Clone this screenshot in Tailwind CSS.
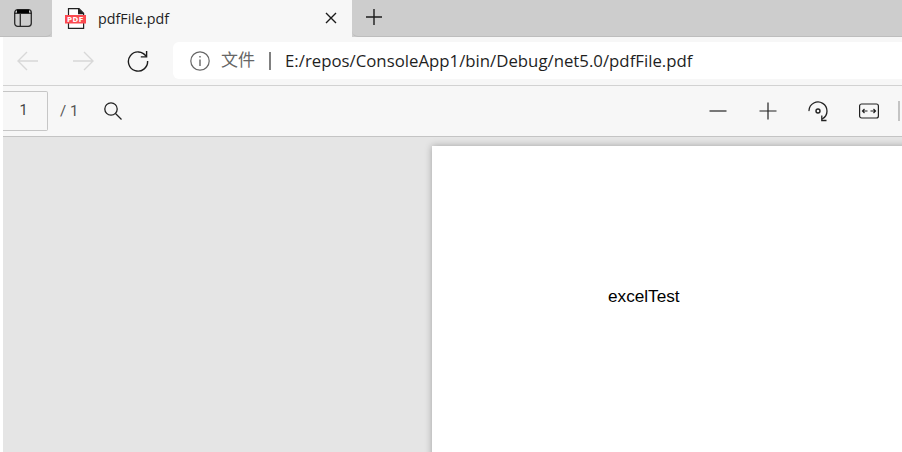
<!DOCTYPE html>
<html lang="en">
  <head>
    <meta charset="UTF-8" />
    <title>pdfFile.pdf</title>
    <script src="https://cdn.jsdelivr.net/npm/@tailwindcss/browser@4"></script>
  </head>
  <body class="w-[902px] h-[452px] overflow-hidden bg-white font-['Roboto','Noto_Sans_CJK_SC',sans-serif]">
    <!-- tab strip -->
    <div class="flex h-[37px] bg-[#cdcdcd]">
      <div class="w-[52px] h-[37px] flex items-center pl-[14px] pb-[1px] border-b border-[#bdbdbd] rounded-br-[6px]">
        <svg width="18" height="18" viewBox="0 0 18 18" fill="none" stroke="#2a2a2a" stroke-width="1.3">
          <rect x="0.7" y="0.7" width="16.6" height="16.6" rx="3" />
          <path d="M3 2.5H15" stroke="#000" stroke-width="3.6" />
          <path d="M0.7 4.2H17.3" stroke="#000" stroke-width="1" />
          <path d="M6.3 4.5V17" />
        </svg>
      </div>
      <div class="w-[300px] h-[37px] bg-[#f7f7f7] flex items-center pl-[13px] pr-[15px] relative">
        <svg width="21" height="21" viewBox="0 0 21 21" fill="none">
          <path d="M3.5 0.7H14L18.6 5.3V20.3H3.5Z" fill="#fff" stroke="#222" stroke-width="1.2" />
          <path d="M13.6 0.7V5.6H18.6" fill="#222" stroke="#222" stroke-width="1.2" />
          <rect x="0" y="7" width="21" height="8.5" fill="#fb4a50" />
          <text x="10.5" y="14" text-anchor="middle" font-family="'DejaVu Sans'" font-size="6.8" font-weight="700" fill="#fff" letter-spacing="0.5">PDF</text>
        </svg>
        <span class="ml-[12px] text-[14.3px] text-[#1f1f1f] font-['Open_Sans','Roboto',sans-serif]">pdfFile.pdf</span>
        <svg class="ml-auto mb-[1px]" width="12" height="12" viewBox="0 0 12 12" stroke="#1a1a1a" stroke-width="1.4">
          <path d="M1 1L11 11M11 1L1 11" />
        </svg>
      </div>
      <div class="flex-1 h-[37px] border-b border-[#bdbdbd] rounded-bl-[6px] flex items-center pl-[13px] pb-[2px]">
        <svg width="18" height="18" viewBox="0 0 18 18" stroke="#1c1c1c" stroke-width="1.4">
          <path d="M9 1V17M1 9H17" />
        </svg>
      </div>
    </div>

    <div class="flex h-[415px]">
      <div class="w-[3px] shrink-0 bg-white"></div>
      <div class="flex-1 flex flex-col min-w-0">
        <!-- address bar -->
        <div class="h-[49px] shrink-0 bg-[#f7f7f7] border-b border-[#d2d2d2] flex items-start">
          <div class="w-[170px] h-[48px] flex items-center shrink-0">
            <svg class="ml-[14px]" width="22" height="20" viewBox="0 0 22 20" fill="none" stroke="#d8d8d8" stroke-width="1.4">
              <path d="M21 10H1M10 1L1 10L10 19" />
            </svg>
            <svg class="ml-[33px]" width="22" height="20" viewBox="0 0 22 20" fill="none" stroke="#d8d8d8" stroke-width="1.4">
              <path d="M1 10H21M12 1L21 10L12 19" />
            </svg>
            <svg class="ml-[33px]" width="22" height="22" viewBox="0 0 22 22" fill="none" stroke="#1c1c1c" stroke-width="1.4">
              <path d="M19.2 6.5A9.6 9.6 0 1 0 20.6 11" />
              <path d="M19.6 1V6.9H13.8" />
            </svg>
          </div>
          <div class="flex-1 h-[37px] mt-[5px] bg-white rounded-l-[6px] flex items-center pl-[17px] text-[#1f1f1f]">
            <svg width="20" height="20" viewBox="0 0 20 20" fill="none" stroke="#666" stroke-width="1.2">
              <circle cx="10" cy="10" r="9.2" />
              <path d="M10 8.5V15" stroke-width="1.4" />
              <path d="M10 5V6.6" stroke-width="1.4" />
            </svg>
            <span class="ml-[11px] text-[17px] text-[#666]">文件</span>
            <span class="ml-[14px] w-[2px] h-[18px] bg-[#808080]"></span>
            <span class="ml-[14px] text-[16.8px] font-['Open_Sans','Roboto',sans-serif] whitespace-nowrap">E:/repos/ConsoleApp1/bin/Debug/net5.0/pdfFile.pdf</span>
          </div>
        </div>

        <!-- pdf toolbar -->
        <div class="h-[51px] shrink-0 bg-[#f7f7f7] border-b border-[#c4c4c4] flex items-center text-[#555]">
          <div class="w-[45px] h-[40px] -mt-[1px] border border-l-0 border-[#c6c6c6] rounded-r-[2px] flex items-center justify-center pr-[3px] text-[14.5px] text-[#444]">1</div>
          <span class="ml-[12px] text-[15px] whitespace-nowrap">/ 1</span>
          <svg class="ml-[25px]" width="20" height="20" viewBox="0 0 20 20" fill="none" stroke="#222" stroke-width="1.3">
            <circle cx="8" cy="8" r="6.2" />
            <path d="M12.5 12.5L18.5 18.5" />
          </svg>
          <div class="ml-auto flex items-center">
            <svg width="18" height="18" viewBox="0 0 18 18" stroke="#222" stroke-width="1.2"><path d="M0.5 9H17.5" /></svg>
            <svg class="ml-[32px]" width="18" height="18" viewBox="0 0 18 18" stroke="#222" stroke-width="1.2"><path d="M0.5 9H17.5M9 0.5V17.5" /></svg>
            <svg class="ml-[30px]" width="22" height="22" viewBox="0 0 22 22" fill="none" stroke="#222" stroke-width="1.3">
              <path d="M2 10.5A9 9 0 1 1 15.5 18.8" stroke-linecap="round" />
              <circle cx="11" cy="11" r="2" stroke-width="1.4" />
              <path d="M14.8 15.5V20.5H19.5" />
            </svg>
            <svg class="ml-[30px]" width="20" height="16" viewBox="0 0 20 16" fill="none" stroke="#222" stroke-width="1.2">
              <rect x="0.6" y="1" width="18.8" height="14" rx="2" />
              <path d="M3.5 8H8.5M5.5 6L3.5 8L5.5 10M11.5 8H16.5M14.5 6L16.5 8L14.5 10" />
            </svg>
            <span class="ml-[19px] mr-[2px] w-[2px] h-[20px] bg-[#c4c4c4]"></span>
          </div>
        </div>

        <!-- viewer -->
        <div class="flex-1 bg-[#e5e5e5] pt-[9px] pl-[429px] overflow-hidden">
          <div class="h-[400px] w-[600px] bg-white shadow-[0_0_7px_rgba(0,0,0,0.3)] pl-[176px] pt-[139px]">
            <span class="text-[17.2px] leading-[18px] text-black font-['Liberation_Sans',sans-serif]">excelTest</span>
          </div>
        </div>
      </div>
    </div>
  </body>
</html>
